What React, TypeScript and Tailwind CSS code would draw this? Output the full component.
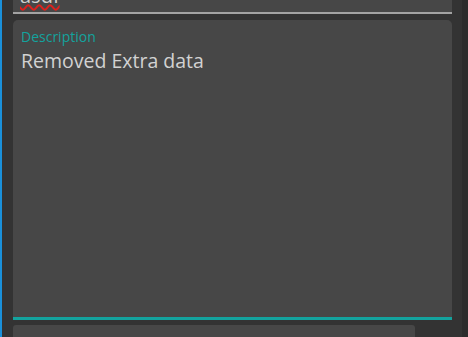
export default function App() {
  return (
    <div className="w-[468px] h-[337px] flex overflow-hidden bg-[#333333] font-['Open_Sans','Noto_Sans',sans-serif]">
      <div className="w-[2px] shrink-0 bg-[#1a90da]" />
      <div className="flex-1 flex flex-col pl-[11px] pr-[10px]">
        {/* title field, scrolled mostly out of view */}
        <div className="h-[14px] shrink-0 bg-[#474747] border-b-2 border-[#a3a3a3] overflow-hidden relative">
          <span className="absolute left-[7px] top-[-17px] text-[20px] leading-[26px] text-[#d0d0d0] underline decoration-wavy decoration-[#e0201c] underline-offset-[1px]">
            asdf
          </span>
        </div>

        {/* description field */}
        <div className="mt-[6px] h-[300px] shrink-0 bg-[#474747] rounded-t-[5px] border-b-[3px] border-[#13a39e] px-[8px] pt-[7px]">
          <div className="text-[14px] leading-[20px] text-[#13a39e]">Description</div>
          <div className="text-[19.5px] leading-[28px] text-[#d2d2d2]">Removed Extra data</div>
        </div>

        {/* next field, cut off */}
        <div className="mt-[5px] w-[402px] flex-1 bg-[#474747] rounded-t-[3px]" />
      </div>
      <div className="w-[6px] shrink-0 bg-[#2c2c2c]" />
    </div>
  )
}
